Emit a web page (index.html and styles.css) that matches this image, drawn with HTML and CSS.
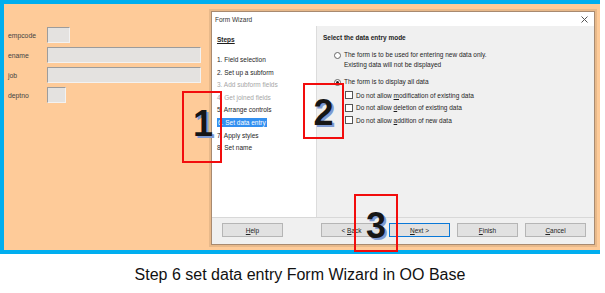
FILE: index.html
```html
<!DOCTYPE html>
<html>
<head>
<meta charset="utf-8">
<link rel="stylesheet" href="styles.css">
</head>
<body>
<div class="frame">
  <div class="fields">
    <div class="row"><span class="lbl">empcode</span><span class="inp short"></span></div>
    <div class="row"><span class="lbl">ename</span><span class="inp long"></span></div>
    <div class="row"><span class="lbl">job</span><span class="inp long"></span></div>
    <div class="row"><span class="lbl">deptno</span><span class="inp tiny"></span></div>
  </div>
  <div class="dialog">
    <div class="titlebar">
      <span>Form Wizard</span>
      <svg class="close" width="7" height="7" viewBox="0 0 7 7"><path d="M0.5 0.5 L6.5 6.5 M6.5 0.5 L0.5 6.5" stroke="#555" stroke-width="1" fill="none"/></svg>
    </div>
    <div class="main">
      <div class="steps">
        <div class="steps-head">Steps</div>
        <ul class="step-list">
          <li>1. Field selection</li>
          <li>2. Set up a subform</li>
          <li class="off">3. Add subform fields</li>
          <li class="off">4. Get joined fields</li>
          <li>5. Arrange controls</li>
          <li><span class="sel">6. Set data entry</span></li>
          <li>7. Apply styles</li>
          <li>8. Set name</li>
        </ul>
      </div>
      <div class="content">
        <div class="c-title">Select the data entry mode</div>
        <div class="opt opt1">
          <span class="radio"></span>
          <span class="opt-text">The form is to be used for entering new data only.<br>Existing data will not be displayed</span>
        </div>
        <div class="opt opt2">
          <span class="radio on"></span>
          <span class="opt-text">The form is to display all data</span>
        </div>
        <div class="checks">
          <div class="chk"><span class="box"></span><span>Do not allow <u>m</u>odification of existing data</span></div>
          <div class="chk"><span class="box"></span><span>Do not allow <u>d</u>eletion of existing data</span></div>
          <div class="chk"><span class="box"></span><span>Do not allow <u>a</u>ddition of new data</span></div>
        </div>
      </div>
    </div>
    <div class="footer">
      <button class="btn"><u>H</u>elp</button>
      <div class="btn-group">
        <button class="btn">&lt; <u>B</u>ack</button>
        <button class="btn def"><u>N</u>ext &gt;</button>
        <button class="btn"><u>F</u>inish</button>
        <button class="btn"><u>C</u>ancel</button>
      </div>
    </div>
  </div>
  <div class="mark m1"><span>1</span></div>
  <div class="mark m2"><span>2</span></div>
  <div class="mark m3"><span>3</span></div>
</div>
<p class="caption">Step 6 set data entry Form Wizard in OO Base</p>
</body>
</html>
```
FILE: styles.css
```css
html, body {
  margin: 0;
  padding: 0;
  background: #ffffff;
}
body {
  width: 605px;
  height: 293px;
  font-family: "Liberation Sans", Arial, sans-serif;
}
.frame {
  position: relative;
  width: 596px;
  height: 246px;
  border-top: 4px solid #00AEEF;
  border-left: 4px solid #00AEEF;
  border-bottom: 4px solid #00AEEF;
  background: #FECB99;
  display: flex;
  align-items: flex-start;
}
.fields {
  width: 207px;
  padding-top: 23px;
  padding-left: 4px;
  box-sizing: border-box;
  display: flex;
  flex-direction: column;
  gap: 4px;
}
.row {
  display: flex;
  align-items: center;
  height: 16px;
}
.lbl {
  width: 39px;
  font-size: 6.8px;
  color: #444;
}
.inp {
  height: 16px;
  box-sizing: border-box;
  background: #E4E2E0;
  border-top: 1px solid #9C9C9C;
  border-left: 1px solid #9C9C9C;
  border-right: 1px solid #F2F2F2;
  border-bottom: 1px solid #F2F2F2;
}
.short { width: 23px; }
.tiny { width: 19px; }
.long { width: 154px; }

.dialog {
  margin-top: 7px;
  width: 384px;
  height: 234px;
  box-sizing: border-box;
  border: 1px solid #A88A70;
  box-shadow: 0 0 0 2px #E8B98A;
  background: #F0F0F0;
  display: flex;
  flex-direction: column;
  font-size: 6.5px;
  color: #1E1E1E;
}
.titlebar {
  height: 14px;
  flex: none;
  background: #FFFFFF;
  display: flex;
  align-items: center;
  justify-content: space-between;
  padding: 0 6px 0 3px;
  color: #333;
}
.close { display: block; }
.main {
  height: 191px;
  flex: none;
  display: flex;
}
.steps {
  width: 104px;
  background: #FFFFFF;
  padding: 9px 0 0 5px;
  box-sizing: border-box;
}
.steps-head {
  font-weight: bold;
  text-decoration: underline;
  line-height: 9px;
}
.step-list {
  list-style: none;
  margin: 10px 0 0 0;
  padding: 0;
}
.step-list li {
  line-height: 12.6px;
  height: 12.6px;
}
.step-list li.off { color: #A6A6A6; }
.sel {
  background: #3390F0;
  color: #FFFFFF;
  padding: 1px 1px;
}
.content {
  flex: 1;
  background: #F0F0F0;
  border-left: 1px solid #DCDCDC;
  padding: 8px 0 0 6px;
}
.c-title {
  font-weight: bold;
  line-height: 8px;
}
.opt {
  display: flex;
  align-items: flex-start;
  line-height: 10px;
}
.opt1 { margin: 8px 0 0 11px; }
.opt2 { margin: 7px 0 0 11px; }
.radio {
  width: 7px;
  height: 7px;
  box-sizing: border-box;
  border: 1px solid #666;
  border-radius: 50%;
  background: #fff;
  margin: 1.5px 3px 0 0;
  flex: none;
  position: relative;
}
.radio.on::after {
  content: "";
  position: absolute;
  left: 1px;
  top: 1px;
  width: 3px;
  height: 3px;
  border-radius: 50%;
  background: #222;
}
.checks {
  margin: 2px 0 0 22px;
}
.chk {
  display: flex;
  align-items: center;
  height: 12.5px;
  gap: 3px;
}
.box {
  width: 6px;
  height: 6px;
  border: 1px solid #555;
  background: #fff;
  flex: none;
}
.footer {
  flex: 1;
  border-top: 1px solid #D8D8D8;
  display: flex;
  justify-content: space-between;
  align-items: flex-start;
  padding: 5px 8px 0 10px;
}
.btn-group {
  display: flex;
  gap: 7px;
}
.btn {
  width: 61px;
  height: 14px;
  margin: 0;
  padding: 0;
  box-sizing: border-box;
  background: #E1E1E1;
  border: 1px solid #B5B5B5;
  font-family: "Liberation Sans", Arial, sans-serif;
  font-size: 6.5px;
  color: #222;
}
.btn.def {
  border: 1px solid #0A78D7;
}
.mark {
  position: absolute;
  border: 2px solid #F20D0D;
  box-sizing: border-box;
  display: flex;
  align-items: center;
  justify-content: center;
}
.mark span {
  font-family: "Liberation Sans", Arial, sans-serif;
  font-weight: bold;
  font-size: 36px;
  line-height: 1;
  color: #161616;
  text-shadow: 2px 2px 0 #7E9AD2;
}
.m1 { left: 178px; top: 87px; width: 40px; height: 72px; }
.m1 span { margin: -6px 0 0 2px; }
.m2 { left: 299px; top: 79px; width: 41px; height: 56px; }
.m2 span { margin: 4px 0 0 0; }
.m3 { left: 350px; top: 190px; width: 44px; height: 58px; }
.m3 span { margin: 5px 0 0 0; }
.caption {
  margin: 12px 0 0 0;
  width: 600px;
  text-align: center;
  font-size: 16px;
  line-height: 18px;
  color: #111;
}
```
